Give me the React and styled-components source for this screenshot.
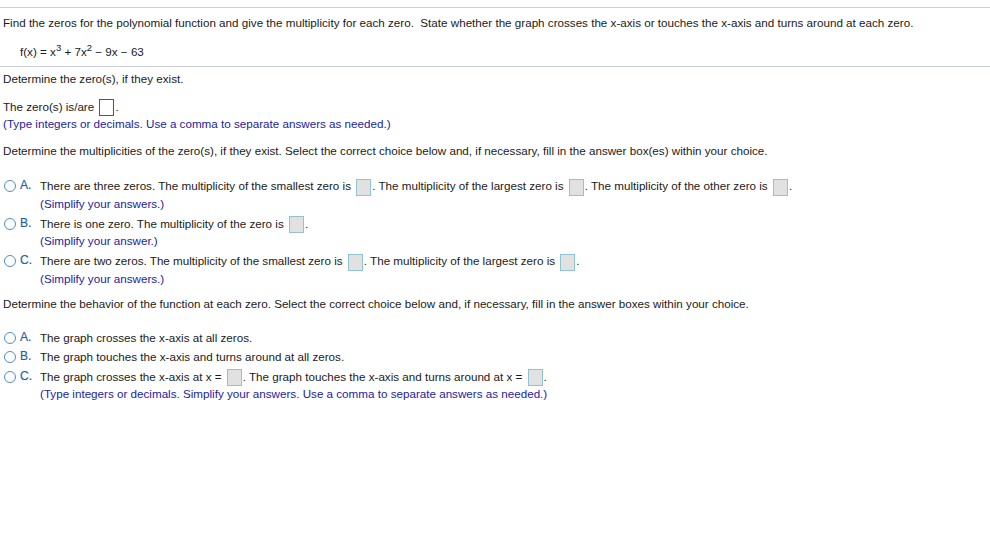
import React from "react";
import styled, { createGlobalStyle } from "styled-components";

const GlobalStyle = createGlobalStyle`
  body {
    margin: 0;
    background: #ffffff;
    font-family: Arial, "Liberation Sans", sans-serif;
    font-size: 11.65px;
    color: #1a1a1a;
  }
`;

const Page = styled.div`
  padding-top: 7px;
`;

const Section = styled.div`
  border-top: 1px solid #c9cfdc;
  padding: ${(p) => p.$pad || "8px 3px 0"};
`;

const Line = styled.div`
  line-height: 14px;
  margin: ${(p) => p.$m || "0"};
  padding-left: ${(p) => p.$indent || 0}px;
  white-space: nowrap;
`;

const Hint = styled.div`
  color: #1c1ca0;
  line-height: 14px;
  margin: ${(p) => p.$m || "0"};
  padding-left: ${(p) => p.$indent || 0}px;
  white-space: nowrap;
`;

const Box = styled.span`
  display: inline-block;
  width: 13px;
  height: 15px;
  vertical-align: middle;
  margin: -2px 1px -2px 2px;
  border: 1px solid ${(p) => (p.$active ? "#1c6a88" : "#8ec4d3")};
  background: ${(p) => (p.$active ? "#ffffff" : "#e1e1e1")};
`;

const Choice = styled.div`
  display: grid;
  grid-template-columns: 17px 20px 1fr;
  align-items: start;
  margin: ${(p) => p.$m || "0"};
  white-space: nowrap;
`;

const Radio = styled.span`
  width: 10px;
  height: 10px;
  border-radius: 50%;
  border: 1.3px solid #4f8ec4;
  margin: 1px 0 0 1px;
`;

const Letter = styled.span`
  color: #1f5fa6;
  line-height: 12px;
  font-size: 12px;
  -webkit-text-stroke: 0.2px #1f5fa6;
`;

const Body = styled.div`
  line-height: 14px;
  & > div + div {
    margin-top: 3px;
  }
`;

const Sup = styled.sup`
  font-size: 9.5px;
  vertical-align: 5px;
  line-height: 0;
`;

export default function App() {
  return (
    <Page>
      <GlobalStyle />
      <Section $pad="8px 3px 7px">
        <Line>
          Find the zeros for the polynomial function and give the multiplicity for each zero.&nbsp; State whether the graph crosses the x-axis or touches the x-axis and turns around at each zero.
        </Line>
        <Line $m="15px 0 0" $indent={17}>
          f(x) = x<Sup>3</Sup> + 7x<Sup>2</Sup> − 9x − 63
        </Line>
      </Section>
      <Section $pad="5px 3px 0">
        <Line>Determine the zero(s), if they exist.</Line>
        <Line $m="14px 0 0">
          The zero(s) is/are <Box $active />.
        </Line>
        <Hint $m="3px 0 0">(Type integers or decimals. Use a comma to separate answers as needed.)</Hint>
        <Line $m="13px 0 0">
          Determine the multiplicities of the zero(s), if they exist. Select the correct choice below and, if necessary, fill in the answer box(es) within your choice.
        </Line>

        <Choice $m="21px 0 0">
          <Radio />
          <Letter>A.</Letter>
          <Body>
            <div>
              There are three zeros. The multiplicity of the smallest zero is <Box />. The multiplicity of the largest zero is <Box />. The multiplicity of the other zero is <Box />.
            </div>
            <Hint>(Simplify your answers.)</Hint>
          </Body>
        </Choice>
        <Choice $m="6px 0 0">
          <Radio />
          <Letter>B.</Letter>
          <Body>
            <div>
              There is one zero. The multiplicity of the zero is <Box />.
            </div>
            <Hint>(Simplify your answer.)</Hint>
          </Body>
        </Choice>
        <Choice $m="6px 0 0">
          <Radio />
          <Letter>C.</Letter>
          <Body>
            <div>
              There are two zeros. The multiplicity of the smallest zero is <Box />. The multiplicity of the largest zero is <Box />.
            </div>
            <Hint>(Simplify your answers.)</Hint>
          </Body>
        </Choice>

        <Line $m="11px 0 0">
          Determine the behavior of the function at each zero. Select the correct choice below and, if necessary, fill in the answer boxes within your choice.
        </Line>

        <Choice $m="20px 0 0">
          <Radio />
          <Letter>A.</Letter>
          <Body>
            <div>The graph crosses the x-axis at all zeros.</div>
          </Body>
        </Choice>
        <Choice $m="5px 0 0">
          <Radio />
          <Letter>B.</Letter>
          <Body>
            <div>The graph touches the x-axis and turns around at all zeros.</div>
          </Body>
        </Choice>
        <Choice $m="6px 0 0">
          <Radio />
          <Letter>C.</Letter>
          <Body>
            <div>
              The graph crosses the x-axis at x = <Box />. The graph touches the x-axis and turns around at x = <Box />.
            </div>
            <Hint>(Type integers or decimals. Simplify your answers. Use a comma to separate answers as needed.)</Hint>
          </Body>
        </Choice>
      </Section>
    </Page>
  );
}
